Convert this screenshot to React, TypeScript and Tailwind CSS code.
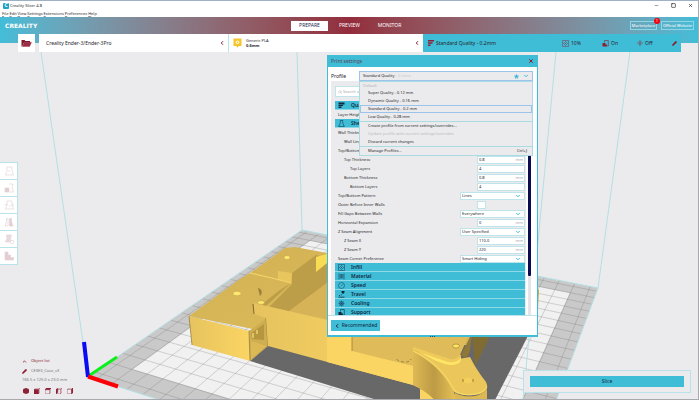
import { useState } from 'react'
import type { ReactNode } from 'react'
import { ChevronDown, ChevronLeft, ChevronUp, Minus, Pencil, Search, Square, Star, X } from 'lucide-react'

type Point = [number, number]

// corners of the build plate: front left, back left, back right, front right
const PLATE: Point[] = [[88, 377], [302, 230], [598, 288], [514, 513]]

// perspective projection of the unit square onto the plate
const project = (u: number, v: number): Point => {
    const [[x0, y0], [x3, y3], [x2, y2], [x1, y1]] = PLATE
    const dx1 = x1 - x2, dx2 = x3 - x2, dx3 = x0 - x1 + x2 - x3
    const dy1 = y1 - y2, dy2 = y3 - y2, dy3 = y0 - y1 + y2 - y3
    const det = dx1 * dy2 - dx2 * dy1
    const g = (dx3 * dy2 - dx2 * dy3) / det
    const h = (dx1 * dy3 - dx3 * dy1) / det
    const w = g * u + h * v + 1
    return [
        ((x1 - x0 + g * x1) * u + (x3 - x0 + h * x3) * v + x0) / w,
        ((y1 - y0 + g * y1) * u + (y3 - y0 + h * y3) * v + y0) / w
    ]
}

const quad = (a: number, b: number) =>
    [project(a, a), project(a, b), project(b, b), project(b, a)].map(p => p.join(',')).join(' ')

const CELLS = 22
const steps = Array.from({ length: CELLS }, (_, i) => (i + 0.5) / CELLS)

function Scene() {
    return (
        <svg className="absolute inset-0 w-full h-full" viewBox="0 0 699 400" preserveAspectRatio="xMidYMid slice" aria-hidden="true">
            <defs>
                <linearGradient id="wall" x1="0" x2="1">
                    <stop offset="0" stopColor="#e6c35e" />
                    <stop offset="1" stopColor="#fbd563" />
                </linearGradient>
                <linearGradient id="top" x1="0" x2="1" y1="0" y2="1">
                    <stop offset="0" stopColor="#d2b155" />
                    <stop offset="1" stopColor="#dfbe5b" />
                </linearGradient>
                <linearGradient id="curve" x1="0" x2="1">
                    <stop offset="0" stopColor="#dfb954" />
                    <stop offset="0.5" stopColor="#bd9a45" />
                    <stop offset="1" stopColor="#e5c055" />
                </linearGradient>
            </defs>
            <rect width="699" height="400" fill="#ebebed" />

            {/* Build plate */}
            <polygon points={quad(0, 1)} fill="#c9c9c9" />
            <polygon points={quad(0.07, 0.93)} fill="#f1f1f1" />
            <polygon points="250,361 267,346 400,332 530,332 495,400 377,400" fill="#686868" />
            <g stroke="#6b6b6b" strokeOpacity="0.45" strokeWidth="0.6">
                {steps.map(s => {
                    const [a, b, c, d] = [project(s, 0), project(s, 1), project(0, s), project(1, s)]
                    return (
                        <g key={s}>
                            <line x1={a[0]} y1={a[1]} x2={b[0]} y2={b[1]} />
                            <line x1={c[0]} y1={c[1]} x2={d[0]} y2={d[1]} />
                        </g>
                    )
                })}
            </g>

            {/* Build volume */}
            <g stroke="#b4dfe4" strokeWidth="1" fill="none">
                <polygon points={quad(0, 1)} />
                <path d="M41 52 88 377M297 52 302 230M630 52 598 288M556 52 523 400" />
            </g>

            {/* Model */}
            <polygon points="472,332 492,332 475,366" fill="#806c33" />
            <path d="M530 285 539 290 538 309 530 316Z" fill="#c9a440" />
            <polygon points="189,316 240,279 250,273 285,248 295,247 327,253 470,290 470,345 330,345" fill="url(#top)" />
            <polygon points="292,273 316,255 327,258 327,283 288,312 269,307 292,284" fill="#bd9e48" />
            <polygon points="262,304 280,290 291,283 265,307" fill="#bd9e48" />
            <polygon points="265,307 288,312 327,283 470,310 470,345" fill="#d6b356" />
            <polygon points="316,257 327,254 327,263 316,272" fill="#f9dc55" />
            <polygon points="278,271 292,273 291,283 278,280" fill="#e9c65d" />
            <path d="M250 273 278 279.500 291 283" stroke="#f3d36a" strokeWidth="1.200" fill="none" />
            <polygon points="189,316 249,331 250,361 192,345" fill="url(#wall)" />
            <polygon points="249,331 267,318 268,346 250,361" fill="#cfae52" />
            <path d="M251 333 264 324 264 340 252 339Z" fill="#b79640" />
            <path d="M251 341 266 346 251 359Z" fill="#dcb955" />
            <path d="M253 333v5M257 330v4" stroke="#f9e27a" strokeWidth="1.200" />
            <path d="M189 316 192 345M249 331 250 361M266 318 268 346" stroke="#8f7634" strokeWidth="0.700" />
            <path d="M254 303 327 320 420 340 413 385 268 346 266 318 254 314Z" fill="url(#wall)" />
            <path d="M253 304 254 314" stroke="#806a30" strokeWidth="1" />
            <path d="M258 288c4 1 5 5 2 8z" fill="#9a7f38" />
            <g fill="#ffe873" stroke="#b2923e" strokeWidth="0.400">
                <ellipse cx="287" cy="257.500" rx="3" ry="2" />
                <ellipse cx="237" cy="293.500" rx="4" ry="2.200" />
                <ellipse cx="261" cy="302.500" rx="3.500" ry="1.800" />
            </g>
            <path d="M327 320 420 332 420 400 435 400C428 392 420 388 413 385L327 362Z" fill="#fbd563" />
            <polygon points="352,332 413,332 413,366 352,351" fill="#dfbb59" />
            <path d="M352 334V351" stroke="#8f7634" strokeWidth="0.700" />
            <path d="M397 359c0 3 13 5 14 0" stroke="#8f7634" strokeWidth="0.800" fill="none" strokeDasharray="3 2" />
            <path d="M413 348 440 358 455 395 455 400 435 400C428 393 420 388 413 385Z" fill="url(#curve)" />
            <path d="M413 351 452 360 470 357C475 367 480 374 486 382C490 390 484 394 474 395C464 396 456 394 453 391C446 378 438 366 413 351Z" fill="#ebc65a" />
            <path d="M413 351C438 363 446 376 455 391C463 397 482 396 487 387" stroke="#fbe068" strokeWidth="1" fill="none" />
            <path d="M455 393C465 398 480 398 487 389V400H455Z" fill="#dcb852" />
            <path d="M413 349C425 354 436 363 450 365C457 365 462 363 461 357L448 359Z" fill="#ffe566" />
            <path d="M413 347 413 350 448 362C455 363 461 361 461 355Z" fill="#efca5a" />
            <path d="M413 332H470L460 355C458 358 455 360 450 359L413 347Z" fill="#dfbc59" />
            <path d="M472 333 461 355C466 360 469 356 470 350Z" fill="#8f7738" />
            <ellipse cx="456" cy="346" rx="3.500" ry="2" fill="#ffe362" stroke="#8f7634" strokeWidth="0.600" />
            <ellipse cx="468" cy="380.500" rx="5" ry="3" fill="#f3cf5c" />
            <path d="M463 379v3M473 379v3" stroke="#8f7634" strokeWidth="0.900" />

            {/* Origin axes */}
            <g strokeWidth="4" fill="none">
                <path d="M88.500 376 117 357" stroke="#0bf01a" strokeWidth="3" />
                <path d="M88 377 84 342" stroke="#0a0af5" />
                <path d="M88 376.500 118 386.500" stroke="#fb0007" />
            </g>
        </svg>
    )
}

function TitleBar() {
    const menus = ['File', 'Edit', 'View', 'Settings', 'Extensions', 'Preferences', 'Help']
    return (
        <div className="bg-white border-t border-[#9db0c4]">
            <div className="flex items-center h-[9px] pl-[3px] pr-[5px]">
                <span className="flex items-center justify-center w-[6px] h-[6px] rounded-[1px] bg-[#1aa5c8] text-white text-[5px] leading-none font-bold">C</span>
                <h1 className="ml-px grow text-[4px] leading-none">Creality Slicer 4.8</h1>
                <div className="flex items-center gap-[12px] text-[#222]">
                    <button aria-label="Minimize"><Minus size={5} /></button>
                    <button aria-label="Maximize"><Square size={5} strokeWidth={3} /></button>
                    <button aria-label="Close"><X size={5} strokeWidth={3} /></button>
                </div>
            </div>
            <nav className="flex gap-px h-[7px] items-center pl-[2px] text-[4px] leading-none">
                {menus.map(m => (
                    <button key={m}><span className="underline decoration-[#999]">{m[0]}</span>{m.slice(1)}</button>
                ))}
            </nav>
        </div>
    )
}

function Header() {
    return (
        <header className="h-[26px] pt-[3px] pl-[5px] pr-[4px] bg-linear-to-r from-[#42bdd8] via-[#932c3c] to-[#42bdd8]">
            <div className="grid grid-cols-[1fr_auto_1fr] items-center h-[11px]">
                <div className="text-white font-bold text-[6px] leading-none font-['DejaVu_Sans',sans-serif]">CREALITY</div>
                <nav className="flex gap-[3px] text-[5px] leading-none text-white">
                    <button className="w-[37px] h-[10px] bg-white text-[#1c1c50]">PREPARE</button>
                    <button className="w-[37px] h-[10px]">PREVIEW</button>
                    <button className="w-[37px] h-[10px]">MONITOR</button>
                </nav>
                <div className="flex justify-end gap-[4px] text-[4px] leading-none text-white">
                    <div className="relative">
                        <button className="w-[27px] h-[9px] border border-[#8fd6e6]">Marketplace</button>
                        <span className="absolute -top-[3px] -right-[3px] w-[6px] h-[6px] rounded-full bg-[#f5000c] text-center text-[4px] leading-[6px]">1</span>
                    </div>
                    <button className="w-[33px] h-[9px] border border-[#8fd6e6] whitespace-nowrap">Official Website</button>
                </div>
            </div>
        </header>
    )
}

function StageBar() {
    return (
        <div className="-mt-[9px] flex pl-[18px] pr-[17px] h-[18px] text-[5px] leading-none">
            <button aria-label="Open file" className="w-[17px] mr-[4px] bg-white flex items-center justify-center">
                <svg width="11" height="8" viewBox="0 0 11 8" aria-hidden="true">
                    <path d="M0.500 7.500v-6.500h3l1 1h4.500v1.500h-6l-2 4z" fill="#7b1a30" />
                    <path d="M1.300 7.500 3.300 3.300h7.200L8.700 7.500z" fill="#9c2b43" stroke="#7b1a30" strokeWidth="0.300" />
                </svg>
            </button>
            <button className="basis-[190px] grow flex items-center justify-between bg-white pl-[7px] pr-[3px] border-r border-[#b8e3ea]">
                <span>Creality Ender-3/Ender-3Pro</span>
                <ChevronLeft size={6} strokeWidth={4} className="text-[#8e2036]" />
            </button>
            <button className="basis-[194px] grow flex items-center bg-white pl-[4px] pr-[3px]">
                <svg width="9" height="10" viewBox="0 0 9 10" aria-hidden="true">
                    <path d="M0.500 0.500h8v7.500h-2.500l-1.500 1.500-1.500-1.500h-2.500z" fill="#f5c62c" />
                    <circle cx="4.500" cy="4.200" r="1.800" fill="#fff7d8" />
                    <circle cx="4.500" cy="4.200" r="0.700" fill="#f5c62c" />
                </svg>
                <span className="grow ml-[4px] text-left text-[4px] leading-[5px]">Generic PLA<br /><b>0.6mm</b></span>
                <ChevronLeft size={6} strokeWidth={4} className="text-[#8e2036]" />
            </button>
            <button className="basis-[258px] grow flex items-center bg-[#3fbdd7] pl-[5px] pr-[4px]">
                <svg width="6" height="6" viewBox="0 0 6 6" fill="#8e2036" aria-hidden="true">
                    <path d="M0 0h6v1.500h-6zM0 2.200h4.500v1.500h-4.500zM0 4.500h2.500v1.500h-2.500z" />
                </svg>
                <span className="grow ml-[2px] text-left">Standard Quality - 0.2mm</span>
                <span className="flex items-center gap-[2px] w-[40px]"><InfillIcon color="#7a4a5c" /> 10%</span>
                <span className="flex items-center gap-[2px] w-[35px]"><SupportIcon color="#8e2036" /> On</span>
                <span className="flex items-center gap-[2px] w-[35px]">
                    <svg width="6" height="6" viewBox="0 0 6 6" fill="none" stroke="#7a4a5c" strokeWidth="0.700" aria-hidden="true">
                        <path d="M3 0v2.500M3 6V3.500M0 3h6M2 1.500 3 2.500 4 1.500M2 4.800 3 3.700 4 4.800" />
                    </svg>
                    Off
                </span>
                <Pencil size={5} fill="#8e2036" strokeWidth={3} className="text-[#8e2036]" />
            </button>
        </div>
    )
}

function InfillIcon({ color = '#1b4b63' }: { color?: string }) {
    return (
        <svg width="7" height="7" viewBox="0 0 7 7" fill="none" stroke={color} strokeWidth="0.600" aria-hidden="true">
            <path d="M0.500 0.500h6v6h-6zM2 2l3 3M5 2 2 5M3.500 1v1M3.500 5v1M1 3.500h1M5 3.500h1" />
        </svg>
    )
}

function SupportIcon({ color = '#10283c' }: { color?: string }) {
    return (
        <svg width="7" height="7" viewBox="0 0 7 7" aria-hidden="true">
            <path d="M0.500 3h3v1.500h1.500v2h-4.500z" fill={color} />
            <path d="M2.500 2.500v-2h3.800v5.500h-1" fill="none" stroke={color} strokeWidth="0.600" />
        </svg>
    )
}

const sectionIcons: Record<string, ReactNode> = {
    Quality: (
        <svg width="7" height="7" viewBox="0 0 7 7" fill="#10283c" aria-hidden="true">
            <path d="M0.500 0.500h6v2h-6zM0.500 3h4.500v1h-4.500zM0.500 4.500h3v1.500h-3z" />
        </svg>
    ),
    Shell: (
        <svg width="7" height="7" viewBox="0 0 7 7" fill="none" stroke="#1b4b63" strokeWidth="0.700" aria-hidden="true">
            <path d="M2 0.500h3M2.300 0.500v2.500L0.700 6.500h5.600L4.700 3V0.500" />
        </svg>
    ),
    Infill: <InfillIcon />,
    Material: (
        <svg width="7" height="7" viewBox="0 0 7 7" stroke="#1b4b63" strokeWidth="0.700" aria-hidden="true">
            <path d="M1 0.500v6M6 0.500v6M2.300 1v4.500M3.500 1v4.500M4.700 1v4.500" />
        </svg>
    ),
    Speed: (
        <svg width="7" height="7" viewBox="0 0 7 7" fill="none" stroke="#1b4b63" strokeWidth="0.600" aria-hidden="true">
            <circle cx="3.500" cy="3.500" r="3" />
            <path d="M3 4.200 5 2.200" />
        </svg>
    ),
    Travel: (
        <svg width="7" height="7" viewBox="0 0 7 7" fill="#10283c" aria-hidden="true">
            <path d="M3.500 0h3v1.500l-1.500 1.500-1.500-1.500zM0.500 5.800h6v0.700h-6zM1 4.200h1v0.800h-1zM2.800 3.500h1v0.800h-1z" />
        </svg>
    ),
    Cooling: (
        <svg width="7" height="7" viewBox="0 0 7 7" fill="none" stroke="#1b4b63" strokeWidth="0.600" aria-hidden="true">
            <path d="M3.500 0.500v6M0.500 3.500h6M1.300 1.300l4.400 4.400M5.700 1.300 1.300 5.700" />
            <circle cx="3.500" cy="3.500" r="2" />
        </svg>
    ),
    Support: <SupportIcon />
}

function Section({ name }: { name: string }) {
    return (
        <button className="w-full h-[9px] pl-[3px] flex items-center gap-[6px] bg-[#3fbdd7] border-b border-[#8fd8e6] text-[5px] leading-none font-semibold text-[#10283c]">
            {sectionIcons[name]}
            {name}
        </button>
    )
}

type Setting = {
    label: string
    indent?: 0 | 1 | 2
    kind: 'number' | 'select' | 'check'
    value?: string
    unit?: string
}

const INDENT = ['pl-[3px]', 'pl-[9px]', 'pl-[15px]']

function SettingRow({ label, indent = 0, kind, value, unit }: Setting) {
    const id = label.toLowerCase().replace(/[^a-z]+/g, '-')
    return (
        <div className={`flex items-center h-[9px] ${INDENT[indent]}`}>
            <label htmlFor={id} className="grow">{label}</label>
            {kind === 'number' && (
                <div className="flex items-center w-[48px] h-[8px] bg-white border border-[#bfe4ea] px-px">
                    <input id={id} defaultValue={value} className="w-0 grow outline-none" />
                    {unit && <span className="text-[#a8a8ac]">{unit}</span>}
                </div>
            )}
            {kind === 'select' && (
                <div className="relative w-[65px] h-[8px] bg-white border border-[#bfe4ea]">
                    <select id={id} className="block w-full h-full appearance-none pl-px outline-none">
                        <option>{value}</option>
                    </select>
                    <ChevronDown size={6} className="absolute right-[3px] top-0 text-[#3fbdd7] pointer-events-none" strokeWidth={4} />
                </div>
            )}
            {kind === 'check' && (
                <div className="w-[48px] flex">
                    <input id={id} type="checkbox" className="appearance-none w-[9px] h-[8px] bg-white border border-[#bfe4ea]" />
                </div>
            )}
        </div>
    )
}

const shellSettings: Setting[] = [
    { label: 'Wall Thickness', kind: 'number', value: '0.8', unit: 'mm' },
    { label: 'Wall Line Count', indent: 1, kind: 'number', value: '2' },
    { label: 'Top/Bottom Thickness', kind: 'number', value: '0.8' },
    { label: 'Top Thickness', indent: 1, kind: 'number', value: '0.8', unit: 'mm' },
    { label: 'Top Layers', indent: 2, kind: 'number', value: '4' },
    { label: 'Bottom Thickness', indent: 1, kind: 'number', value: '0.8', unit: 'mm' },
    { label: 'Bottom Layers', indent: 2, kind: 'number', value: '4' },
    { label: 'Top/Bottom Pattern', kind: 'select', value: 'Lines' },
    { label: 'Outer Before Inner Walls', kind: 'check' },
    { label: 'Fill Gaps Between Walls', kind: 'select', value: 'Everywhere' },
    { label: 'Horizontal Expansion', kind: 'number', value: '0', unit: 'mm' },
    { label: 'Z Seam Alignment', kind: 'select', value: 'User Specified' },
    { label: 'Z Seam X', indent: 1, kind: 'number', value: '110.0', unit: 'mm' },
    { label: 'Z Seam Y', indent: 1, kind: 'number', value: '220', unit: 'mm' },
    { label: 'Seam Corner Preference', kind: 'select', value: 'Smart Hiding' }
]

const profiles = ['Super Quality - 0.12 mm', 'Dynamic Quality - 0.16 mm', 'Standard Quality - 0.2 mm', 'Low Quality - 0.28 mm']

function ProfileMenu() {
    const [active, setActive] = useState('Standard Quality - 0.2 mm')
    return (
        <div className="absolute left-0 right-0 top-full z-10 bg-[#ebebed] border border-[#a9dbe3]">
            <div className="pl-[3px] h-[7px] leading-[7px] text-[#b4b4b8]">Default</div>
            {profiles.map(p => (
                <button
                    key={p}
                    onClick={() => setActive(p)}
                    className={`block w-full h-[8px] pl-[7px] text-left border ${p === active ? 'border-[#9cc4ea]' : 'border-transparent'}`}
                >
                    {p}
                </button>
            ))}
            <div className="border-y border-[#a9dbe3]">
                <button className="block w-full h-[8px] pl-[8px] text-left">Create profile from current settings/overrides...</button>
                <button disabled className="block w-full h-[8px] pl-[8px] text-left text-[#b9b9bd]">Update profile with current settings/overrides</button>
                <button className="block w-full h-[8px] pl-[8px] text-left">Discard current changes</button>
            </div>
            <button className="flex items-center justify-between w-full h-[8px] pl-[8px] pr-[5px]">
                <span>Manage Profiles...</span>
                <span>Ctrl+J</span>
            </button>
        </div>
    )
}

function PrintSettings() {
    return (
        <section className="absolute top-[3px] right-[160px] w-[211px] bg-white border-x border-[#3fbdd7] text-[4px] leading-none">
            <div className="flex items-center justify-between h-[12px] pl-[3px] pr-[3px] bg-[#3fbdd7]">
                <h2 className="text-[5px] text-[#5c4358]">Print settings</h2>
                <button aria-label="Close settings"><X size={6} strokeWidth={4} className="text-[#8e2036]" /></button>
            </div>
            <div className="flex items-center pt-[4px] pl-[3px] pr-[4px] h-[14px]">
                <span className="w-[28px] text-[5px]">Profile</span>
                <div className="relative grow">
                    <button className="flex items-center w-full h-[10px] px-[3px] bg-[#ebebed] border border-[#9cc4ea]">
                        <span className="grow text-left">Standard Quality <span className="text-[#c9c9cd]">- 0.2mm</span></span>
                        <Star size={5} fill="#3fbdd7" className="text-[#3fbdd7] mr-[4px]" />
                        <ChevronDown size={6} strokeWidth={4} className="text-[#3fbdd7]" />
                    </button>
                    <ProfileMenu />
                </div>
            </div>
            <div className="flex ml-[3px] mr-[4px] h-[234px] overflow-hidden bg-[#ebebed] pl-[4px] pt-[5px]">
                <div className="grow">
                    <div className="flex items-center gap-px h-[11px] mb-[4px] px-[2px] bg-white border border-[#bfe4ea] text-[#a8a8ac]">
                        <Search size={4} />
                        <input aria-label="Search settings" placeholder="Search settings" className="grow outline-none placeholder:text-[#a8a8ac]" />
                    </div>
                    <Section name="Quality" />
                    <SettingRow label="Layer Height" kind="number" value="0.2" unit="mm" />
                    <Section name="Shell" />
                    {shellSettings.map(s => <SettingRow key={s.label} {...s} />)}
                    {['Infill', 'Material', 'Speed', 'Travel', 'Cooling', 'Support'].map(n => <Section key={n} name={n} />)}
                </div>
                <div className="w-[7px] px-[2px] bg-white ml-px">
                    <div className="h-full bg-[#e4e4e8]">
                        <div className="h-[190px] rounded-[1px] bg-[#0b0b50]" />
                    </div>
                </div>
            </div>
            <div className="border-t border-[#b8e3ea] pt-[4px] pb-[4px] px-[3px]">
                <button className="flex items-center justify-center gap-[2px] w-[49px] h-[11px] bg-[#3fbdd7] text-[5px] text-[#10283c]">
                    <ChevronLeft size={6} strokeWidth={4} />
                    Recommended
                </button>
            </div>
            <div className="flex items-center justify-center gap-px h-[2px] bg-[#3fbdd7]">
                <i className="w-px h-px bg-[#1b4b63]" />
                <i className="w-px h-px bg-[#1b4b63]" />
                <i className="w-px h-px bg-[#1b4b63]" />
            </div>
        </section>
    )
}

const tools: { name: string; icon: ReactNode }[] = [
    { name: 'Move', icon: <path d="M3 1h5v3l1.500 5h-8l1-3M3 1v3M2 5h4" /> },
    { name: 'Scale', icon: <><path d="M5 1h4l-1 3 1.500 5h-4" /><path d="M1 5h4v4h-4z" fill="#e4ccd1" /></> },
    { name: 'Rotate', icon: <path d="M3 1h5v3l1.500 5h-8l1.500-5zM0.500 4.500h3M7.500 5h2.500M5 6h2" /> },
    { name: 'Mirror', icon: <><path d="M4 1.500h-1.500v3l-1.500 4.500h3z" /><path d="M5.500 1.500h2v3l1.500 4.500h-3.500z" fill="#e4ccd1" /></> },
    { name: 'Per model settings', icon: <><path d="M2.500 1h5l-1 3.500 1 3.500h-6l1.500-3.500z" fill="#eadadd" /><circle cx="8" cy="8" r="1.700" fill="#fff" /></> },
    { name: 'Support blocker', icon: <path d="M1 1h3v3h2.500v2.500h3v2.500h-8.500z" fill="#e4ccd1" /> }
]

function ToolBar() {
    return (
        <aside className="mt-[110px] w-[18px] flex flex-col border-t border-r border-[#b8e3ea]">
            {tools.map(t => (
                <button key={t.name} aria-label={t.name} className="h-[17px] flex items-center justify-center bg-white border-b border-[#b8e3ea]">
                    <svg width="10" height="10" viewBox="0 0 10 10" fill="none" stroke="#e3d6d9" strokeWidth="0.700">{t.icon}</svg>
                </button>
            ))}
        </aside>
    )
}

// cube with one face filled, used for the camera presets
const views = [
    { name: '3D view', face: 'M3 0 6 1.500v3L3 6 0 4.500v-3z' },
    { name: 'Front view', face: 'M0 1.500h4.500v4.500h-4.500z' },
    { name: 'Top view', face: 'M1.500 0h4.500l-1.500 1.800h-4.500z' },
    { name: 'Left view', face: 'M0 1.500 1.800 0.500v4l-1.800 1.500z' },
    { name: 'Right view', face: 'M4.500 1.500 6 0v4.500l-1.500 1.500z' }
]

function ObjectList() {
    return (
        <div className="pl-[22px] pb-[5px] text-[4px] leading-none text-[#77777c]">
            <button className="flex items-center gap-[4px] h-[10px] text-[#8e2036]"><ChevronUp size={5} strokeWidth={4} /> Object list</button>
            <button className="flex items-center gap-[4px] h-[10px]">
                <Pencil size={5} strokeWidth={3} fill="#8e2036" className="text-[#8e2036]" /> CE3E3_Case_v3
            </button>
            <p className="h-[8px] leading-[8px]">166.5 x 125.0 x 23.0 mm</p>
            <div className="flex gap-[5px] mt-[4px] pl-px">
                {views.map(v => (
                    <button key={v.name} aria-label={v.name}>
                        <svg width="6" height="6" viewBox="0 0 6 6" stroke="#8e2036" strokeWidth="0.400" fill="none">
                            {v.name !== '3D view' && (
                                <path d="M0.200 1.500h4.300v4.300h-4.300zM0.200 1.500 1.700 0.200h4.100L4.500 1.500M5.800 0.200v4L4.500 5.800" />
                            )}
                            <path d={v.face} fill="#8e2036" />
                        </svg>
                    </button>
                ))}
            </div>
        </div>
    )
}

export default function App() {
    return (
        <main className="relative min-h-screen flex flex-col bg-[#ebebed] overflow-hidden font-['Noto_Sans',sans-serif] text-[#26262c]">
            <Scene />
            <div className="relative grow flex flex-col border-r border-b border-[#a9a9ad]">
                <TitleBar />
                <Header />
                <StageBar />
                <div className="relative grow flex flex-col justify-between">
                    <ToolBar />
                    <div className="flex items-end justify-between">
                        <ObjectList />
                        <div className="w-[168px] h-[23px] mr-[7px] mb-[6px] py-[5px] px-[6px] bg-[#ebebed] border border-[#b8e3ea]">
                            <button className="block w-full h-[11px] bg-[#3fbdd7] text-[5px] leading-none text-[#10283c]">Slice</button>
                        </div>
                    </div>
                    <PrintSettings />
                </div>
            </div>
        </main>
    )
}
